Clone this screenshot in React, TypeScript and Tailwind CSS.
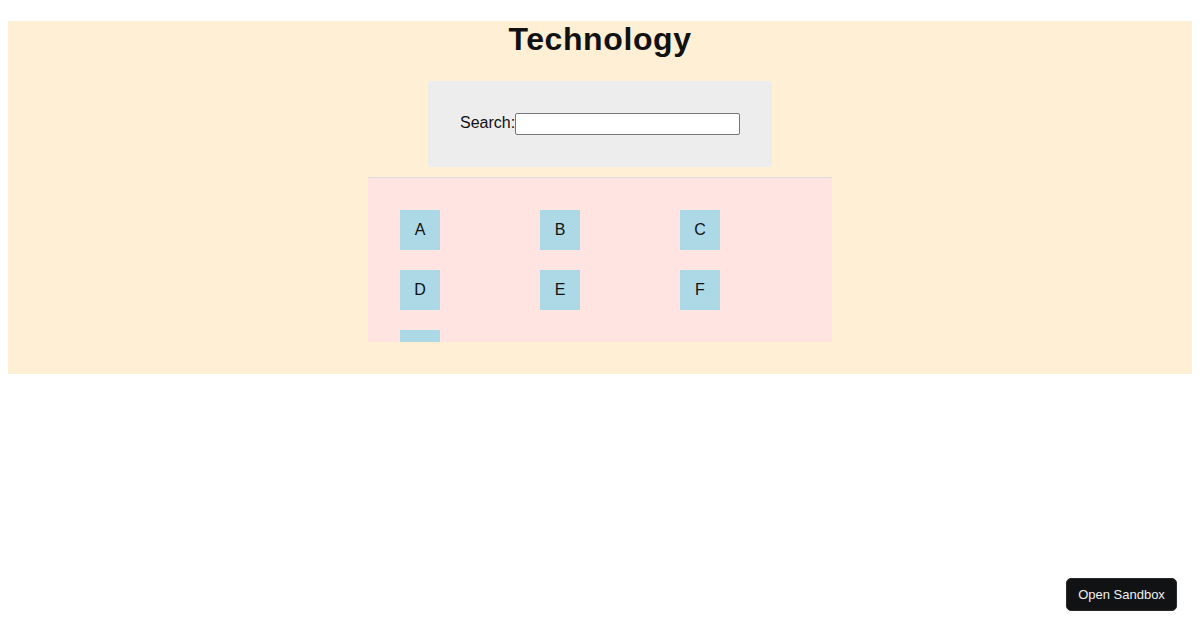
import React from "react";

export default function App() {
  const items = ["A", "B", "C", "D", "E", "F", "G"];
  return (
    <div className="p-2 font-['Liberation_Sans',Arial,sans-serif] text-black">
      <div className="mt-[13px] bg-[#ffefd5] pb-8">
        <h1 className="text-center text-[32px] font-bold leading-[37px] tracking-[0.6px] text-[#111]">Technology</h1>
        <div className="mx-auto mt-[23px] flex w-[344px] items-start bg-[#ededed] p-8">
          <label className="mt-[1px] text-[16px] leading-[18px] text-[#111]">Search:</label>
          <input
            type="text"
            className="h-[22px] w-[225px] rounded-[2px] border border-[#767676] bg-white px-[2px] text-[13px] outline-none"
          />
        </div>
        <div className="mx-auto mt-[10px] h-[165px] w-[464px] overflow-hidden border-t border-[#dcdcdc] bg-[#ffe4e1] px-8 pt-8">
          <div className="grid grid-cols-[repeat(3,140px)] gap-y-5">
            {items.map((l) => (
              <div key={l} className="flex h-10 w-10 items-center justify-center bg-[#add8e6] text-[16px] text-[#111]">
                {l}
              </div>
            ))}
          </div>
        </div>
      </div>
      <button className="fixed bottom-[19px] right-[23px] flex h-[33px] w-[111px] items-center justify-center rounded-[5px] border border-[#2a2a2a] bg-[#111214] text-[13px] text-[#f0f0f0] font-['Liberation_Sans',Arial,sans-serif]">
        Open Sandbox
      </button>
    </div>
  );
}
